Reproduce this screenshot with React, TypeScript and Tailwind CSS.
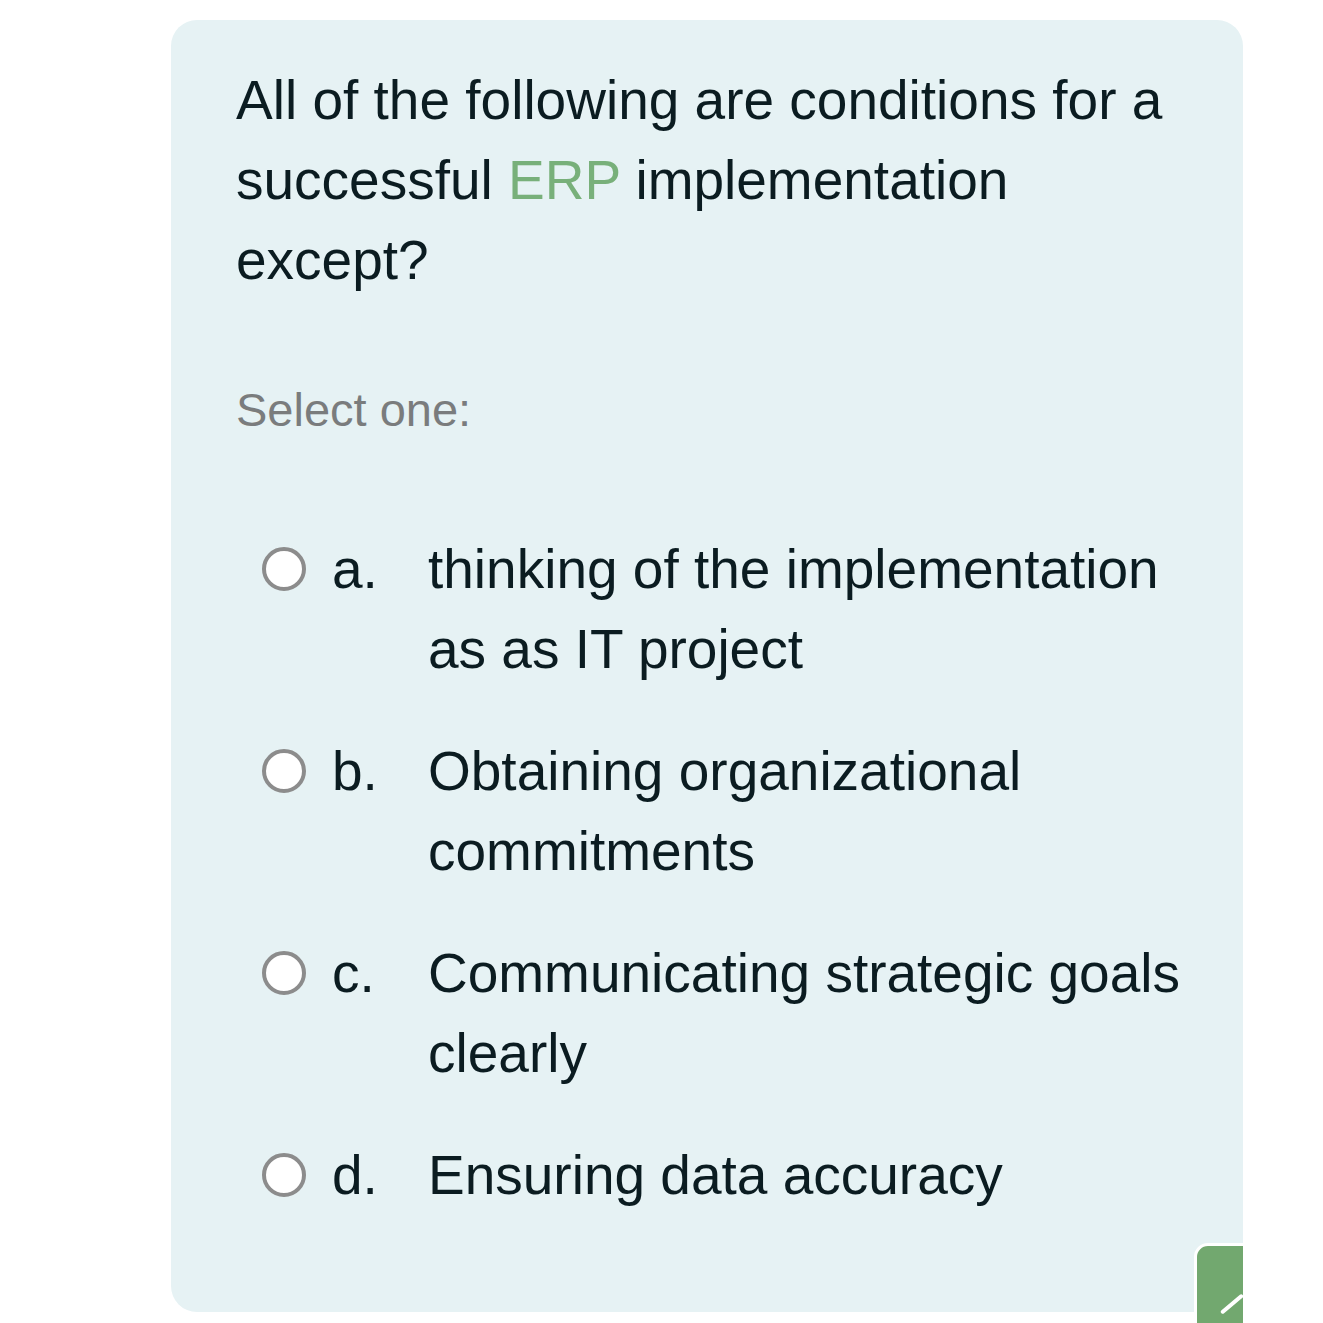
import React from "react";

const options = [
  { l: "a.", t: ["thinking of the implementation", "as as IT project"] },
  { l: "b.", t: ["Obtaining organizational", "commitments"] },
  { l: "c.", t: ["Communicating strategic goals", "clearly"] },
  { l: "d.", t: ["Ensuring data accuracy"] },
];

export default function App() {
  return (
    <div
      className="relative w-[1323px] h-[1323px] bg-white overflow-hidden"
      style={{ fontFamily: '"Liberation Sans", Arial, sans-serif' }}
    >
      <div className="absolute left-0 top-0 w-[1243px] h-[1323px] overflow-hidden">
        <div className="ml-[171px] mt-[20px] w-[1072px] h-[1292px] rounded-l-[26px] rounded-tr-[26px] bg-[#e6f2f4] pl-[65px] pt-[40px]">
          <div className="text-[55px] leading-[80px] text-[#0b1c21] whitespace-nowrap">
            All of the following are conditions for a
            <br />
            successful <span className="text-[#78b07a]">ERP</span> implementation
            <br />
            except?
          </div>
          <div className="mt-[75px] text-[47px] leading-[70px] text-[#7a7c7d]">Select one:</div>
          <div className="mt-[84px] flex flex-col gap-[42px]">
            {options.map((o) => (
              <div key={o.l} className="flex text-[55px] leading-[80px] text-[#0b1c21]">
                <div className="w-[96px] flex items-center h-[80px] pl-[26px]">
                  <div className="w-[44px] h-[44px] rounded-full border-[4px] border-[#8c8c8c] bg-white shrink-0" />
                </div>
                <div className="w-[96px]">{o.l}</div>
                <div className="whitespace-nowrap">
                  {o.t.map((line) => (
                    <div key={line}>{line}</div>
                  ))}
                </div>
              </div>
            ))}
          </div>
        </div>
        <div className="absolute left-[1194px] top-[1243px] w-[70px] h-[90px] rounded-tl-[14px] border-[3px] border-white bg-[#72a86f] overflow-hidden">
          <div className="absolute left-[33px] top-[44px] w-[4px] h-[28px] bg-white rounded-full rotate-[50deg]" />
        </div>
      </div>
    </div>
  );
}
